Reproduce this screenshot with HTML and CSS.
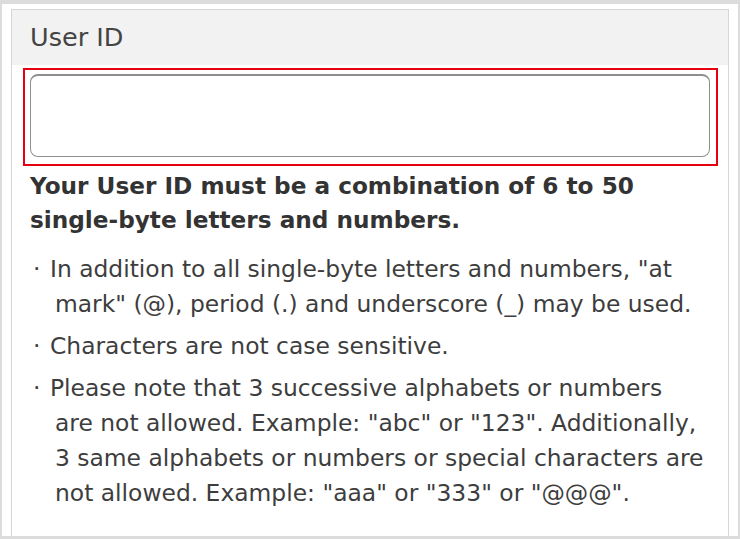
FILE: index.html
```html
<!DOCTYPE html>
<html lang="en">

<head>
    <meta charset="UTF-8">
    <meta name="viewport" content="width=device-width, initial-scale=1.0">
    <title>User ID</title>
    <link rel="stylesheet" href="styles.css">
</head>

<body>
    <div class="frame">
        <div class="form-card">
            <div class="field-head">User ID</div>
            <div class="field-body">
                <div class="highlight">
                    <input type="text" class="text-input">
                </div>
                <p class="rule">Your User ID must be a combination of 6 to 50 single-byte letters and numbers.</p>
                <ul class="notes">
                    <li>In addition to all single-byte letters and numbers, "at mark" (@), period (.) and underscore (_) may be used.</li>
                    <li>Characters are not case sensitive.</li>
                    <li>Please note that 3 successive alphabets or numbers are not allowed. Example: "abc" or "123". Additionally, 3 same alphabets or numbers or special characters are not allowed. Example: "aaa" or "333" or "@@@".</li>
                </ul>
            </div>
            <div class="field-head next"></div>
        </div>
    </div>
</body>

</html>
```

FILE: styles.css
```css
body {
    margin: 0;
    height: 539px;
    overflow: hidden;
    background-color: #dcdcdc;
    font-family: "DejaVu Sans", Arial, sans-serif;
    color: #333;
}

.frame {
    margin: 4px 2px 0;
    height: 532px;
    overflow: hidden;
    background-color: #fff;
    padding: 5px 9px 0 9px;
    box-sizing: border-box;
}

.form-card {
    border: 1px solid #d6d6d6;
    border-bottom: none;
}

.field-head {
    background-color: #f2f2f2;
    height: 55px;
    padding: 0 18px;
    font-size: 25.5px;
    line-height: 55px;
    color: #444;
}

.field-head.next {
    border-top: 1px solid #d6d6d6;
}

.field-body {
    padding: 3px 10px 20px 11px;
}

.highlight {
    border: 2px solid #e60012;
    padding: 4px 6px 7px 5px;
}

.text-input {
    display: block;
    width: 100%;
    height: 83px;
    box-sizing: border-box;
    border: 1px solid #8f8f8f;
    border-top-width: 2px;
    border-radius: 8px;
    background-color: #fff;
}

.rule {
    margin: 3px 6px 0 7px;
    font-size: 23.2px;
    font-weight: bold;
    line-height: 34px;
    color: #333;
}

.notes {
    list-style: none;
    margin: 15px 13px 0 7px;
    padding: 0 0 0 25px;
    font-size: 23.4px;
    line-height: 35px;
    color: #3d3d3d;
}

.notes li {
    text-indent: -22px;
    margin-bottom: 7px;
}

.notes li::before {
    content: "·";
    display: inline-block;
    width: 17px;
    text-indent: 0;
}
```
